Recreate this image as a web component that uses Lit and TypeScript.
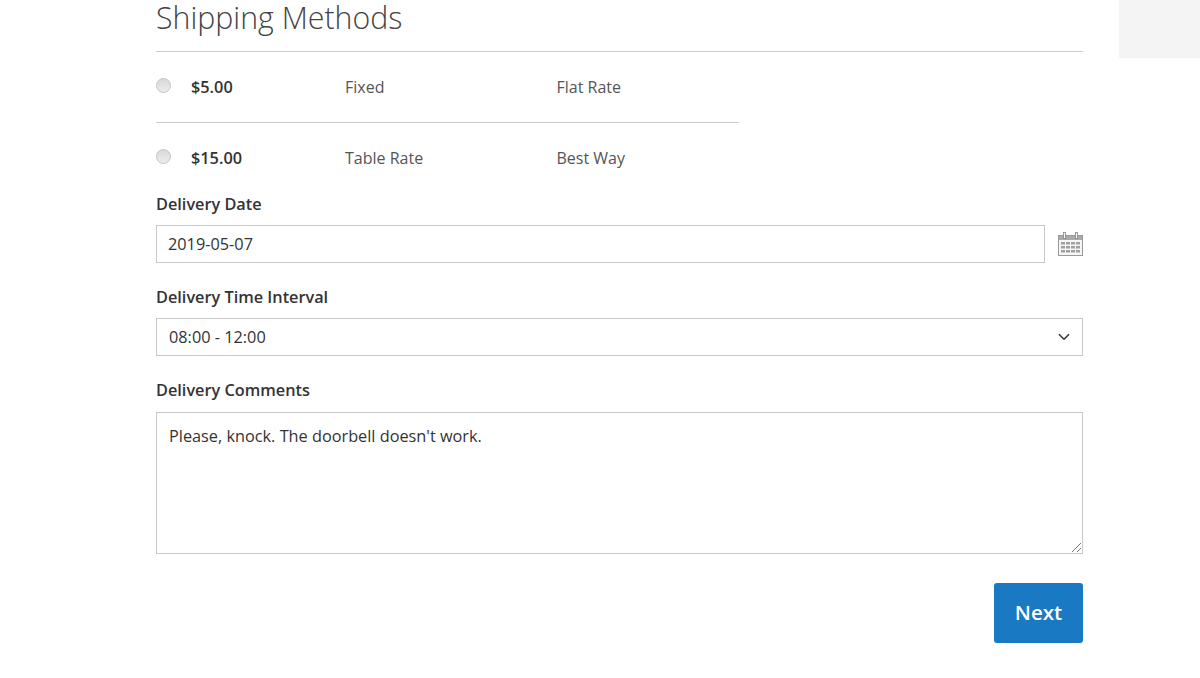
import { LitElement, html, svg, css } from "lit";
import { customElement } from "lit/decorators.js";

const methods = [
  { price: "$5.00", method: "Fixed", carrier: "Flat Rate" },
  { price: "$15.00", method: "Table Rate", carrier: "Best Way" },
];

@customElement("app-root")
export class AppRoot extends LitElement {
  static styles = css`
    :host {
      display: block;
      height: 678px;
      background: #fff;
      color: #333;
      font-family: "Open Sans", "Liberation Sans", sans-serif;
      font-size: 16px;
      overflow: hidden;
    }
    .page {
      display: grid;
      grid-template-columns: 927px 81px;
      column-gap: 36px;
      padding-left: 156px;
      align-items: start;
    }
    .corner { height: 58px; background: #f4f4f4; }
    .title {
      margin: 0;
      height: 51px;
      border-bottom: 1px solid #ccc;
      font-size: 30.3px;
      font-weight: 300;
      line-height: 36px;
      color: #444;
    }
    .methods { width: 583px; }
    .row {
      display: grid;
      grid-template-columns: 35px 154px 211.5px 1fr;
      align-items: center;
      height: 70px;
      color: #555;
    }
    .row + .row { border-top: 1px solid #ccc; }
    .radio {
      box-sizing: border-box;
      width: 15px; height: 15px;
      border-radius: 50%;
      border: 1px solid #c4c4c4;
      background: linear-gradient(#d9d9d9, #ececec);
      margin-top: -4px;
    }
    .price { font-weight: 600; font-size: 16.3px; color: #333; }
    .label {
      font-weight: 600;
      font-size: 16.3px;
      line-height: 22px;
      color: #333;
      margin-bottom: 10px;
    }
    .field { display: flex; flex-direction: column; }
    .time-field { margin-top: 23px; }
    .comments-field { margin-top: 23px; }
    .comments-field .label { margin-bottom: 11px; }
    .box {
      box-sizing: border-box;
      border: 1px solid #c8c8c8;
      background: #fff;
      color: #333;
      font-size: 16.3px;
      display: flex;
      align-items: center;
      height: 38px;
      padding: 0 12px;
    }
    .date-row { display: flex; align-items: center; justify-content: space-between; }
    .date-row .box { width: 889px; padding: 0 11px; }
    .cal { display: block; }
    .select { justify-content: space-between; }
    .text { height: 142px; align-items: flex-start; padding-top: 12px; line-height: 22px; position: relative; }
    .grip { position: absolute; right: 0; bottom: 0; }
    .actions { display: flex; justify-content: flex-end; margin-top: 29px; }
    .next {
      width: 89px; height: 60px;
      border: 0;
      border-radius: 3px;
      background: #1979c3;
      color: #fff;
      font: 600 20.6px "Open Sans", "Liberation Sans", sans-serif;
      padding: 0 0 2px;
    }
  `;

  render() {
    return html`
      <div class="page">
        <main>
          <h2 class="title">Shipping Methods</h2>
          <div class="methods">
            ${methods.map(
              (m) => html`
                <div class="row">
                  <span class="radio"></span>
                  <span class="price">${m.price}</span>
                  <span>${m.method}</span>
                  <span>${m.carrier}</span>
                </div>
              `
            )}
          </div>
          <div class="field">
            <div class="label">Delivery Date</div>
            <div class="date-row">
              <div class="box">2019-05-07</div>
              <svg class="cal" width="25" height="24" viewBox="0 0 25 24" fill="none">
                <rect x="0.5" y="3.5" width="24" height="20" fill="#f6f6f6" stroke="#999"/>
                <rect x="1" y="4" width="23" height="4" fill="#aaa"/>
                <rect x="5.5" y="0.5" width="2" height="6" fill="#f6f6f6" stroke="#888" stroke-width="0.8"/>
                <rect x="17.5" y="0.5" width="2" height="6" fill="#f6f6f6" stroke="#888" stroke-width="0.8"/>
                <g fill="#a0a0a0">
                  ${[3, 8, 13, 18].flatMap((x) =>
                    [10, 14, 18].map(
                      (y) => svg`<rect x=${x} y=${y} width="4" height="2.5"></rect>`
                    )
                  )}
                </g>
              </svg>
            </div>
          </div>
          <div class="field time-field">
            <div class="label">Delivery Time Interval</div>
            <div class="box select">
              <span>08:00 - 12:00</span>
              <svg width="12" height="8" viewBox="0 0 12 8" fill="none">
                <path d="M1 1.2 L6 6.2 L11 1.2" stroke="#333" stroke-width="1.6"/>
              </svg>
            </div>
          </div>
          <div class="field comments-field">
            <div class="label">Delivery Comments</div>
            <div class="box text">
              Please, knock. The doorbell doesn't work.
              <svg class="grip" width="12" height="12" viewBox="0 0 12 12" fill="none">
                <path d="M2 11 L11 2 M7 11 L11 7" stroke="#777" stroke-width="1"/>
              </svg>
            </div>
          </div>
          <div class="actions"><button class="next">Next</button></div>
        </main>
        <div class="corner"></div>
      </div>
    `;
  }
}
